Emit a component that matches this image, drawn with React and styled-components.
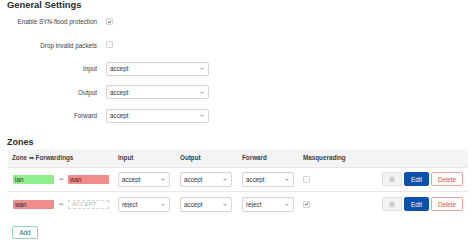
import React from "react";
import styled, { createGlobalStyle } from "styled-components";

const Global = createGlobalStyle`
  html, body { margin: 0; padding: 0; background: #fff; }
  body { font-family: "Liberation Sans", Arial, sans-serif; font-size: 6.3px; color: #404040; }
  * { box-sizing: border-box; }
`;

const Page = styled.div`
  width: 474px;
  height: 244px;
  overflow: hidden;
  padding: 0 6px 0 7px;
`;

const Heading = styled.h2`
  margin: ${(p) => p.$mt || 0}px 0 ${(p) => p.$mb || 0}px 0;
  font-size: ${(p) => p.$size || 9}px;
  line-height: 10px;
  font-weight: bold;
  color: #2a2a2a;
`;

const Form = styled.div`
  display: grid;
  grid-template-columns: 90px 103px;
  column-gap: 9px;
  grid-auto-rows: 23.5px;
  align-items: center;
`;

const Label = styled.div`
  text-align: right;
  color: #404040;
  white-space: nowrap;
`;

const CheckBox = styled.span`
  display: inline-flex;
  align-items: center;
  justify-content: center;
  width: 7px;
  height: 7px;
  border: 1px solid #d4d4d4;
  border-radius: 1px;
  background: #fff;
  svg { display: block; }
`;

const Check = ({ checked }) => (
  <CheckBox>
    {checked && (
      <svg width="6" height="6" viewBox="0 0 10 10">
        <path d="M2 5.2 L4.2 7.4 L8.2 2.6" fill="none" stroke="#333" strokeWidth="1.6" />
      </svg>
    )}
  </CheckBox>
);

const SelectWrap = styled.div`
  position: relative;
  width: ${(p) => p.$w}px;
  height: ${(p) => p.$h}px;
`;

const SelectEl = styled.select`
  appearance: none;
  -webkit-appearance: none;
  width: 100%;
  height: 100%;
  margin: 0;
  padding: 0 8px 0 3px;
  border: 1px solid #d6d6d6;
  border-radius: 2px;
  background: #fff;
  box-shadow: inset 0 1px 1px rgba(0, 0, 0, 0.04);
  font-family: "Liberation Sans", Arial, sans-serif;
  font-size: 6.3px;
  color: #333;
  outline: none;
`;

const Chevron = styled.svg`
  position: absolute;
  right: 5px;
  top: 50%;
  margin-top: -1.5px;
  pointer-events: none;
`;

const Select = ({ value, w, h }) => (
  <SelectWrap $w={w} $h={h}>
    <SelectEl defaultValue={value}>
      <option value="accept">accept</option>
      <option value="reject">reject</option>
      <option value="drop">drop</option>
    </SelectEl>
    <Chevron width="4" height="3" viewBox="0 0 8 5">
      <path d="M1 1 L4 4 L7 1" fill="none" stroke="#555" strokeWidth="1.3" />
    </Chevron>
  </SelectWrap>
);

const Table = styled.div`
  width: 460px;
  margin-left: 1px;
`;

const Row = styled.div`
  display: grid;
  grid-template-columns: 106px 62px 62px 61px 1fr auto;
  align-items: center;
  height: ${(p) => (p.$head ? 19 : 24.5)}px;
  background: ${(p) => (p.$head ? "#f4f4f4" : "#fff")};
  border-bottom: ${(p) => (p.$last ? "none" : "1px solid #e8e8e8")};
`;

const HeadCell = styled.div`
  padding: 0 4px;
  font-weight: bold;
  color: #404040;
  white-space: nowrap;
`;

const Cell = styled.div`
  padding: ${(p) => (p.$right ? "0 5px 0 4px" : "0 4px")};
  display: flex;
  align-items: center;
  gap: 2px;
`;

const ZoneWrap = styled.div`
  display: flex;
  align-items: center;
  padding-left: 1px;
`;

const Badge = styled.span`
  display: inline-flex;
  align-items: center;
  width: 41px;
  height: 9px;
  padding-left: 2px;
  border-radius: 1px;
  background: ${(p) => p.$color};
  color: #2a2a2a;
  font-size: 6.3px;
`;

const Arrow = styled.span`
  width: 14px;
  text-align: center;
  color: #888;
  font-family: "DejaVu Sans", sans-serif;
  font-size: 5.5px;
`;

const Placeholder = styled.span`
  display: inline-flex;
  align-items: center;
  width: 41px;
  height: 9px;
  padding-left: 3px;
  border: 1px dashed #d4d4d4;
  border-radius: 1px;
  color: #b0b0b0;
  font-family: "Liberation Sans", Arial, sans-serif;
  font-style: italic;
  font-size: 5.6px;
  letter-spacing: 0.3px;
  white-space: nowrap;
`;

const Button = styled.button`
  height: 14px;
  min-width: ${(p) => p.$w}px;
  padding: 0;
  margin: 0;
  border-radius: 2px;
  font-family: "Liberation Sans", Arial, sans-serif;
  font-size: 6.3px;
  cursor: pointer;
  border: 1px solid ${(p) => p.$border};
  background: ${(p) => p.$bg};
  color: ${(p) => p.$color};
`;

const AddButton = styled(Button)`
  height: 13px;
  margin: 9px 0 0 5px;
`;

const Menu = () => (
  <svg width="6" height="5" viewBox="0 0 12 10">
    <path d="M1 1.5 H11 M1 5 H11 M1 8.5 H11" stroke="#888" strokeWidth="1.2" />
  </svg>
);

const zones = [
  { name: "lan", color: "#8fef8f", to: { name: "wan", color: "#f08c8c" }, input: "accept", output: "accept", forward: "accept", masq: false },
  { name: "wan", color: "#f08c8c", to: null, input: "reject", output: "accept", forward: "reject", masq: true },
];

export default function App() {
  return (
    <Page>
      <Global />
      <Heading $size={9.4}>General Settings</Heading>
      <Form>
        <Label>Enable SYN-flood protection</Label>
        <div><Check checked /></div>
        <Label>Drop invalid packets</Label>
        <div><Check /></div>
        <Label>Input</Label>
        <Select value="accept" w={103} h={14} />
        <Label>Output</Label>
        <Select value="accept" w={103} h={14} />
        <Label>Forward</Label>
        <Select value="accept" w={103} h={14} />
      </Form>
      <Heading $mt={9} $mb={2}>Zones</Heading>
      <Table>
        <Row $head>
          <HeadCell>Zone ⇒ Forwardings</HeadCell>
          <HeadCell>Input</HeadCell>
          <HeadCell>Output</HeadCell>
          <HeadCell>Forward</HeadCell>
          <HeadCell>Masquerading</HeadCell>
          <HeadCell />
        </Row>
        {zones.map((z, i) => (
          <Row key={z.name + i} $last={i === zones.length - 1}>
            <Cell>
              <ZoneWrap>
                <Badge $color={z.color}>{z.name}</Badge>
                <Arrow>⇒</Arrow>
                {z.to ? <Badge $color={z.to.color}>{z.to.name}</Badge> : <Placeholder>ACCEPT</Placeholder>}
              </ZoneWrap>
            </Cell>
            <Cell><Select value={z.input} w={52} h={15} /></Cell>
            <Cell><Select value={z.output} w={52} h={15} /></Cell>
            <Cell><Select value={z.forward} w={52} h={15} /></Cell>
            <Cell><Check checked={z.masq} /></Cell>
            <Cell $right>
              <Button $w={20} $bg="#f3f3f3" $border="#e0e0e0" $color="#777"><Menu /></Button>
              <Button $w={25} $bg="#0d52aa" $border="#0d52aa" $color="#fff">Edit</Button>
              <Button $w={32} $bg="#fff" $border="#f0a0a0" $color="#dd4f4f">Delete</Button>
            </Cell>
          </Row>
        ))}
      </Table>
      <AddButton $w={26} $bg="#fff" $border="#8fd6b8" $color="#2f6f55">Add</AddButton>
    </Page>
  );
}
